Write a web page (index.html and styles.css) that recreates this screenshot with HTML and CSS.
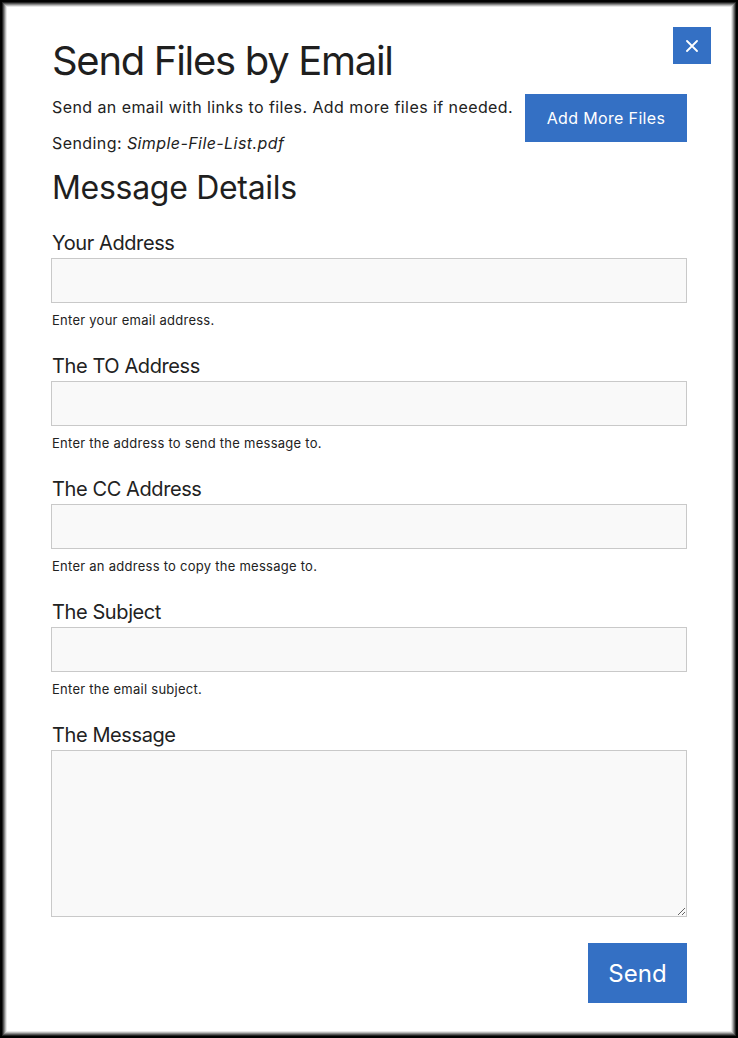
FILE: index.html
```html
<!DOCTYPE html>
<html lang="en">
<head>
<meta charset="utf-8">
<title>Send Files by Email</title>
<link rel="stylesheet" href="styles.css">
</head>
<body>
<div class="modal">
  <button class="close" type="button" aria-label="Close">
    <svg width="12" height="12" viewBox="0 0 12 12"><path d="M1 1 L11 11 M11 1 L1 11" stroke="#fff" stroke-width="1.8" stroke-linecap="round"/></svg>
  </button>
  <h1 class="title">Send Files by Email</h1>
  <div class="intro">
    <div class="intro-text">
      <p class="lead">Send an email with links to files. Add more files if needed.</p>
      <p class="lead second">Sending: <em>Simple-File-List.pdf</em></p>
    </div>
    <button class="btn btn-add" type="button">Add More Files</button>
  </div>
  <h2 class="section">Message Details</h2>
  <form class="form">
    <div class="field">
      <label class="label">Your Address</label>
      <input class="input" type="text">
      <div class="help">Enter your email address.</div>
    </div>
    <div class="field">
      <label class="label">The TO Address</label>
      <input class="input" type="text">
      <div class="help">Enter the address to send the message to.</div>
    </div>
    <div class="field">
      <label class="label">The CC Address</label>
      <input class="input" type="text">
      <div class="help">Enter an address to copy the message to.</div>
    </div>
    <div class="field">
      <label class="label">The Subject</label>
      <input class="input" type="text">
      <div class="help">Enter the email subject.</div>
    </div>
    <div class="field">
      <label class="label">The Message</label>
      <textarea class="input textarea"></textarea>
    </div>
    <div class="actions">
      <button class="btn btn-send" type="button">Send</button>
    </div>
  </form>
</div>
</body>
</html>
```

FILE: styles.css
```css
* { box-sizing: border-box; }
html, body { margin: 0; padding: 0; background: #fff; }
body { font-family: Inter, "Noto Sans", sans-serif; color: #222; }

.modal {
  position: relative;
  width: 738px;
  height: 1038px;
  padding: 37px 51px 0 51px;
  background: #fff;
  box-shadow:
    inset 0 0 0 2px #000,
    inset 0 0 0 3px #222,
    inset 0 0 0 4px #555,
    inset 0 0 0 5px #888,
    inset 0 0 0 6px #bbb,
    inset 0 0 0 7px #e6e6e6;
  overflow: hidden;
}

.close {
  position: absolute;
  top: 27px;
  right: 27px;
  width: 38px;
  height: 37px;
  border: 0;
  padding: 0;
  background: #3470c4;
  display: flex;
  align-items: center;
  justify-content: center;
}

.title {
  margin: 0 0 0 1px;
  font-size: 40px;
  line-height: 48px;
  font-weight: 400;
  letter-spacing: -1.3px;
  color: #1f1f1f;
}

.intro {
  display: flex;
  justify-content: space-between;
  align-items: flex-start;
  margin-top: 9px;
}
.intro-text { padding-left: 1px; }
.lead {
  margin: 0;
  font-size: 16px;
  line-height: 26px;
  letter-spacing: 0.42px;
  color: #222;
}
.lead.second { margin-top: 10px; }

.btn {
  border: 0;
  background: #3470c4;
  color: #fff;
  font-family: Inter, "Noto Sans", sans-serif;
  font-weight: 400;
  padding: 0;
}
.btn-add {
  width: 162px;
  height: 48px;
  font-size: 16px;
  letter-spacing: 0.35px;
}

.section {
  margin: 12px 0 0 1px;
  font-size: 32px;
  line-height: 40px;
  font-weight: 400;
  letter-spacing: -0.3px;
  color: #1f1f1f;
}

.form { margin: 0; }
.field { display: flex; flex-direction: column; }
.field + .field { margin-top: 25px; }
.field:first-child { margin-top: 23px; }

.label {
  font-size: 20px;
  line-height: 24px;
  padding-left: 1px;
  letter-spacing: -0.4px;
  color: #222;
}
.input {
  margin-top: 3px;
  width: 100%;
  height: 45px;
  border: 1px solid #c9c9c9;
  background: #f9f9f9;
  border-radius: 0;
  font-family: inherit;
  font-size: 16px;
  padding: 6px 10px;
}
.textarea {
  height: 167px;
  resize: vertical;
  display: block;
}
.help {
  margin-top: 8px;
  font-size: 13px;
  line-height: 18px;
  padding-left: 1px;
  letter-spacing: 0.26px;
  color: #222;
}

.actions {
  display: flex;
  justify-content: flex-end;
  margin-top: 26px;
}
.btn-send {
  width: 99px;
  height: 60px;
  font-size: 24px;
}
```
